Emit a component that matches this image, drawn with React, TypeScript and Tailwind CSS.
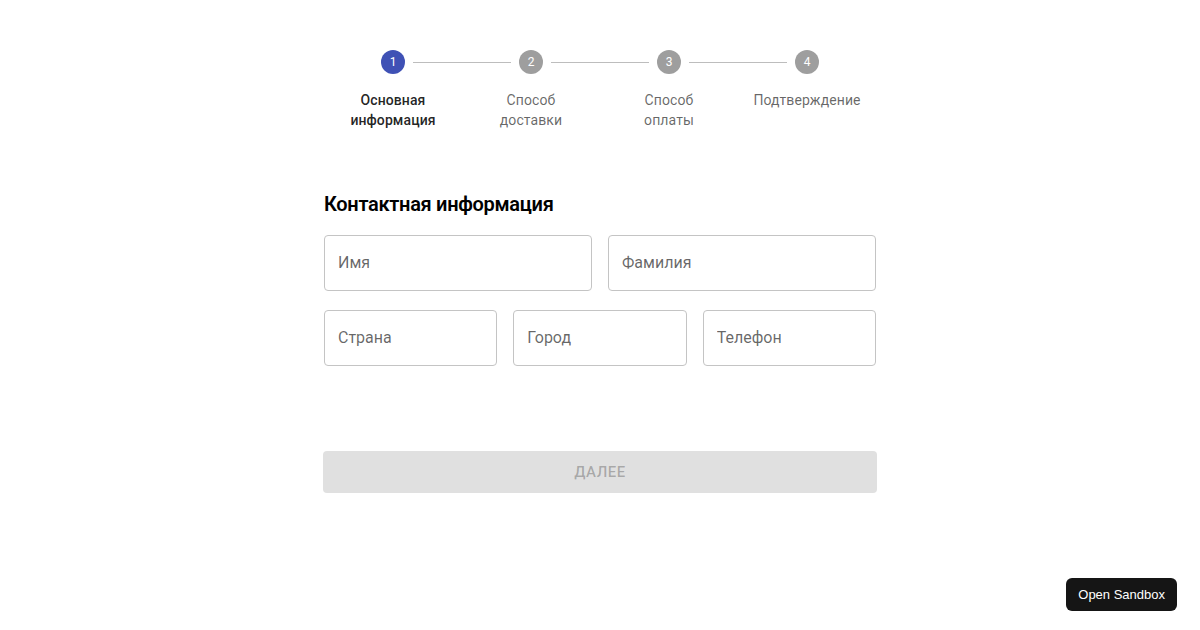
const steps = [
  { n: 1, label: "Основная\nинформация", active: true },
  { n: 2, label: "Способ\nдоставки", active: false },
  { n: 3, label: "Способ\nоплаты", active: false },
  { n: 4, label: "Подтверждение", active: false },
];

function Field({ placeholder }: { placeholder: string }) {
  return (
    <input
      placeholder={placeholder}
      className="h-14 w-full min-w-0 rounded border border-[#c4c4c4] bg-white px-[13px] pb-px text-base text-[#000000de] outline-none placeholder:text-[#00000099]"
    />
  );
}

export default function App() {
  return (
    <div className="relative min-h-[630px] w-full bg-white font-['Roboto',sans-serif]">
      <div className="mx-auto flex w-[552px] flex-col pt-[50px]">
        {/* stepper */}
        <div className="flex">
          {steps.map((s, i) => (
            <div key={s.n} className="relative flex w-[138px] flex-col items-center px-2">
              {i > 0 && (
                <div className="absolute top-3 right-[calc(50%+20px)] left-[calc(-50%+20px)] border-t border-[#bdbdbd]" />
              )}
              <div
                className={
                  "flex h-6 w-6 items-center justify-center rounded-full text-xs text-white " +
                  (s.active ? "bg-[#3f51b5]" : "bg-[#9e9e9e]")
                }
              >
                {s.n}
              </div>
              <div
                className={
                  "mt-4 text-center text-sm leading-5 tracking-[0.1px] whitespace-pre-line " +
                  (s.active ? "font-medium text-[#000000de]" : "text-[#00000099]")
                }
              >
                {s.label}
              </div>
            </div>
          ))}
        </div>

        <h2 className="mt-[58px] mb-[15px] text-[20px] leading-8 font-semibold tracking-[-0.3px] text-black">
          Контактная информация
        </h2>

        <div className="grid grid-cols-2 gap-4">
          <Field placeholder="Имя" />
          <Field placeholder="Фамилия" />
        </div>
        <div className="mt-[19px] grid grid-cols-3 gap-4">
          <Field placeholder="Страна" />
          <Field placeholder="Город" />
          <Field placeholder="Телефон" />
        </div>

        <button
          disabled
          className="-mx-px mt-[85px] h-[42px] w-[554px] rounded bg-[#e0e0e0] text-[15px] font-medium tracking-[0.5px] text-[#00000042] uppercase"
        >
          Далее
        </button>
      </div>

      <button className="fixed right-[23px] bottom-[19px] h-[33px] rounded-md bg-[#151515] px-3 font-['Liberation_Sans',Arial,sans-serif] text-[13px] text-white">
        Open Sandbox
      </button>
    </div>
  );
}
